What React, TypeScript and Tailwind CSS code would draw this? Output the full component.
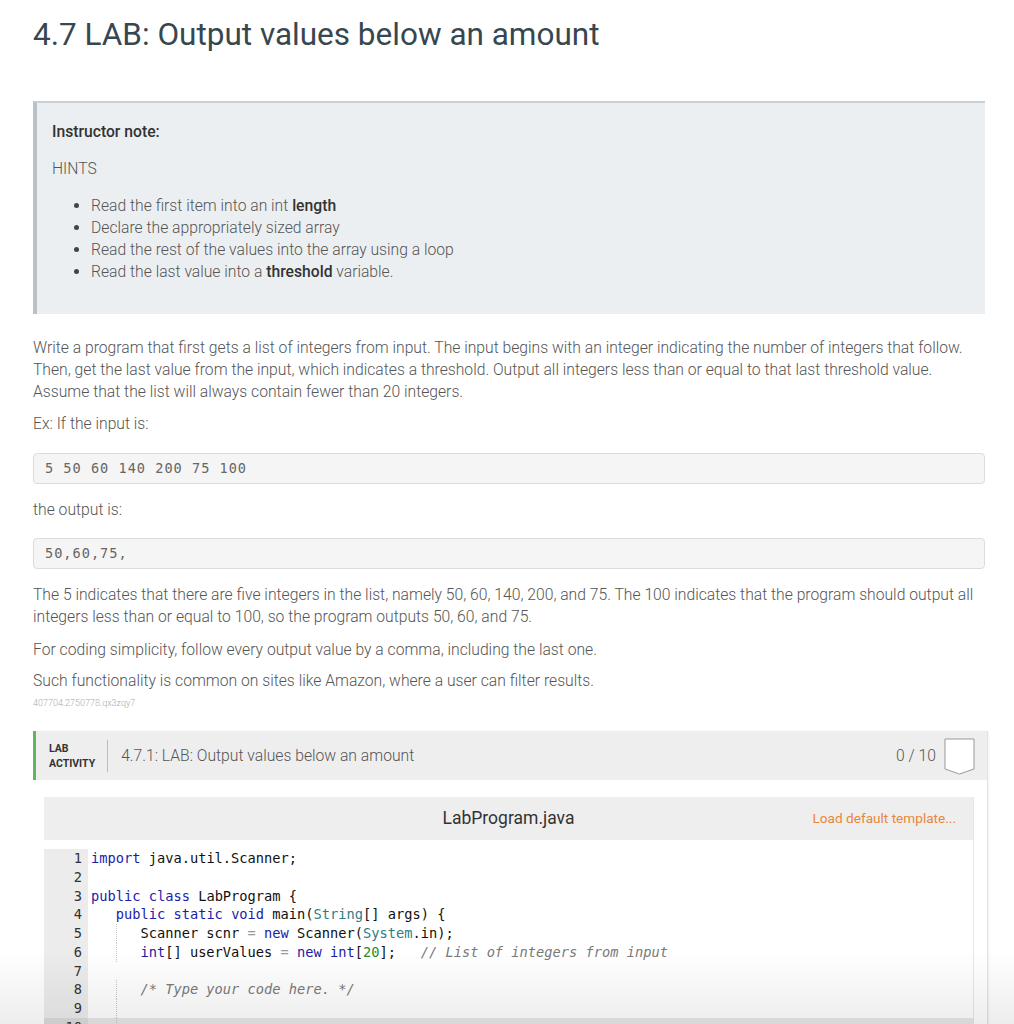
const mono = "font-['DejaVu_Sans_Mono','Liberation_Mono',monospace]";

type Tok = [string, string?];

const K = "text-[#1c1ca8]";
const T = "text-[#2f7b8a]";
const N = "text-[#2e8b24]";
const C = "text-[#7a7a7a] italic";
const O = "text-[#9a9a9a]";

const lines: { indent: number; guide?: boolean; toks: Tok[]; active?: boolean }[] = [
  { indent: 0, toks: [["import", K], [" java.util.Scanner;"]] },
  { indent: 0, toks: [] },
  { indent: 0, toks: [["public", K], [" "], ["class", K], [" LabProgram {"]] },
  { indent: 3, toks: [["public", K], [" "], ["static", K], [" "], ["void", K], [" main("], ["String", T], ["[] args) {"]] },
  { indent: 6, guide: true, toks: [["Scanner scnr "], ["=", O], [" "], ["new", K], [" Scanner("], ["System", T], [".in);"]] },
  { indent: 6, guide: true, toks: [["int", K], ["[] userValues "], ["=", O], [" "], ["new", K], [" "], ["int", K], ["["], ["20", N], ["];   "], ["// List of integers from input", C]] },
  { indent: 0, toks: [] },
  { indent: 6, guide: true, toks: [["/* Type your code here. */", C]] },
  { indent: 6, guide: true, toks: [] },
  { indent: 6, guide: true, toks: [], active: true },
  { indent: 6, guide: true, toks: [["return", K], [";"]] },
  { indent: 3, toks: [["}"]] },
];

function CodeLine({ line, n }: { line: (typeof lines)[number]; n: number }) {
  return (
    <div className={`flex h-[18.75px] leading-[18.75px] ${line.active ? "bg-[#e8e8e8]" : ""}`}>
      <div className={`w-[44px] shrink-0 pr-[6px] text-right text-[#333] ${line.active ? "bg-[#dcdcdc]" : "bg-[#ececec]"}`}>{n}</div>
      <div className="flex whitespace-pre pl-[3px] text-[#111]">
        {line.guide ? (
          <>
            <span className="w-[3ch]" />
            <span className="w-[3ch] border-l border-dotted border-[#c8c8c8]" />
          </>
        ) : (
          <span style={{ width: `${line.indent}ch` }} />
        )}
        <span>
          {line.toks.map((t, i) => (
            <span key={i} className={t[1]}>
              {t[0]}
            </span>
          ))}
        </span>
      </div>
    </div>
  );
}

export default function App() {
  return (
    <div className="relative min-h-screen overflow-hidden bg-white font-['Roboto',sans-serif]">
      <div className="pl-[33px] pr-[29px] pt-[14px]">
        <h1 className="text-[31.5px] leading-[42px] text-[#37474f]">4.7 LAB: Output values below an amount</h1>

        <div className="mt-[45px] h-[213px] border-l-4 border-t-2 border-l-[#b8c2c8] border-t-[#c9d1d6] bg-[#eceff1] pl-[15px] pt-[18px] text-[15.7px] text-[#555]">
          <div className="font-medium leading-[22px] text-[#333]">Instructor note:</div>
          <div className="mt-[15px] font-light leading-[22px]">HINTS</div>
          <ul className="mt-[15px] list-disc pl-[39px] font-light leading-[22px] marker:text-[#444]">
            <li>
              Read the first item into an int <b className="font-medium text-[#333]">length</b>
            </li>
            <li>Declare the appropriately sized array</li>
            <li>Read the rest of the values into the array using a loop</li>
            <li>
              Read the last value into a <b className="font-medium text-[#333]">threshold</b> variable.
            </li>
          </ul>
        </div>

        <div className="mt-[23px] text-[15.7px] font-light leading-[22px] text-[#555]">
          <p>
            Write a program that first gets a list of integers from input. The input begins with an integer indicating the number of integers that follow.
            Then, get the last value from the input, which indicates a threshold. Output all integers less than or equal to that last threshold value.
            Assume that the list will always contain fewer than 20 integers.
          </p>
          <p className="mt-[10px]">Ex: If the input is:</p>
          <div className={`mt-[18px] h-[31px] rounded-sm border border-[#dcdcdc] bg-[#f5f5f5] pl-[11px] text-[13.6px] leading-[29px] tracking-[1px] text-[#666] ${mono}`}>
            5 50 60 140 200 75 100
          </div>
          <p className="mt-[15px]">the output is:</p>
          <div className={`mt-[17px] h-[31px] rounded-sm border border-[#dcdcdc] bg-[#f5f5f5] pl-[11px] text-[13.6px] leading-[29px] tracking-[1px] text-[#666] ${mono}`}>
            50,60,75,
          </div>
          <p className="mt-[15px]">
            The 5 indicates that there are five integers in the list, namely 50, 60, 140, 200, and 75. The 100 indicates that the program should output all
            integers less than or equal to 100, so the program outputs 50, 60, and 75.
          </p>
          <p className="mt-[11px]">For coding simplicity, follow every output value by a comma, including the last one.</p>
          <p className="mt-[9px]">Such functionality is common on sites like Amazon, where a user can filter results.</p>
          <p className="mt-[4px] text-[9px] leading-[14px] text-[#aaa]">407704.2750778.qx3zqy7</p>
        </div>

        <div className="mt-[21px] mr-[-3px] border-r border-[#e2e2e2] shadow-[1px_0_2px_rgba(0,0,0,0.05)]">
          <div className="flex h-[49px] items-center border-l-[3px] border-[#5cb85c] bg-[#eeeeee] pl-[13px] pr-[12px]">
            <div className="text-[10.5px] font-bold leading-[15px] text-[#333]">
              LAB
              <br />
              ACTIVITY
            </div>
            <div className="ml-[12px] h-[32px] w-px bg-[#bbb]" />
            <div className="ml-[13px] flex-1 text-[15.7px] font-light text-[#555]">4.7.1: LAB: Output values below an amount</div>
            <div className="text-[15.7px] font-light text-[#555]">0 / 10</div>
            <svg className="ml-[8px] mt-[2px]" width="31" height="37" viewBox="0 0 31 37">
              <path d="M1 1 H30 V31 L15.5 36 L1 31 Z" fill="white" stroke="#999" strokeWidth="1" />
            </svg>
          </div>

          <div className="pl-[11px] pr-[13px] pt-[17px]">
            <div className="border-r border-[#e6e6e6] bg-white">
              <div className="relative flex h-[43px] items-center justify-center bg-[#eeeeee]">
                <span className="text-[17.5px] text-[#333]">LabProgram.java</span>
                <span className="absolute right-[17px] top-[11px] text-[13.6px] text-[#e8863a]">Load default template...</span>
              </div>
              <div className={`pt-[9px] text-[13.7px] ${mono}`}>
                {lines.map((l, i) => (
                  <CodeLine key={i} line={l} n={i + 1} />
                ))}
              </div>
            </div>
          </div>
        </div>
      </div>
      <div className="pointer-events-none fixed inset-x-0 top-[950px] h-[74px] bg-gradient-to-b from-transparent to-black/[0.07]" />
    </div>
  );
}
